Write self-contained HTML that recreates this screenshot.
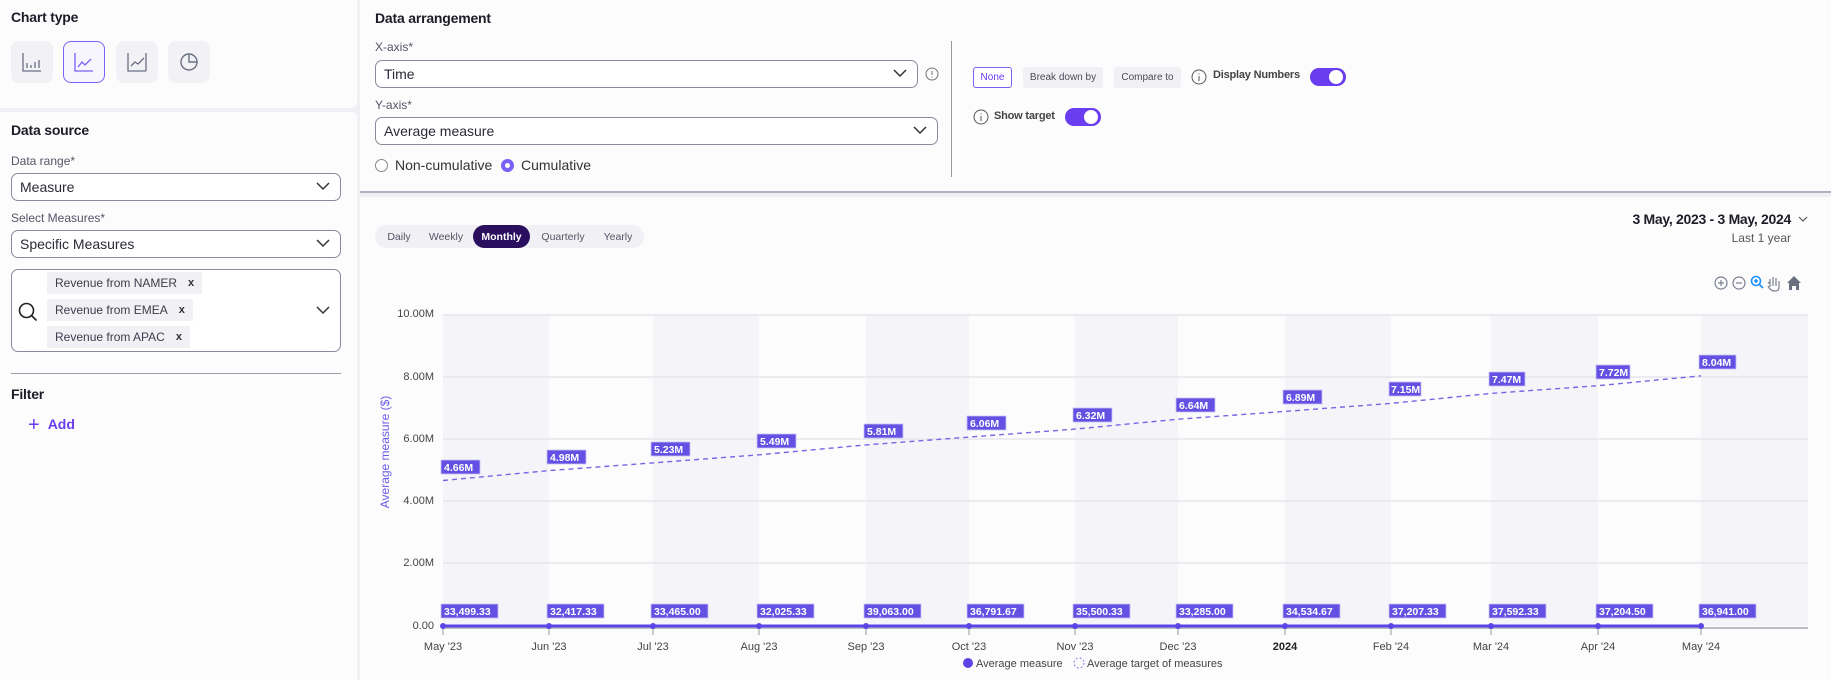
<!DOCTYPE html>
<html><head><meta charset="utf-8">
<style>
*{box-sizing:border-box;margin:0;padding:0}
body{width:1831px;height:680px;background:#efeff4;font-family:"Liberation Sans",sans-serif;color:#1f1f2e;position:relative;overflow:hidden}
.a{position:absolute}
.card{position:absolute;background:#fcfcfd}
.h{font-size:14px;font-weight:bold;color:#1c1c28;letter-spacing:-0.2px}
.lbl{font-size:12px;color:#555566}
.sel{position:absolute;border:1px solid #8a8a9c;border-radius:7px;background:#fff;font-size:14px;color:#2a2a38;padding-left:8px;display:flex;align-items:center}
.chev{position:absolute;right:10px;top:50%;margin-top:-5px}
.ib{position:absolute;width:42px;height:42px;border-radius:8px;background:#f1f1f6;display:flex;align-items:center;justify-content:center}
.chip{position:absolute;left:47px;height:22px;background:#f1f1f5;font-size:12px;color:#3c3c4c;padding:0 8px;display:flex;align-items:center}
.chip b{margin-left:11px;font-size:11px;color:#333}
.btn{position:absolute;top:67px;height:21px;border-radius:3px;background:#f1f1f5;font-size:10px;color:#4a4a5a;display:flex;align-items:center;justify-content:center}
.tog{position:absolute;width:36px;height:18px;border-radius:9px;background:#6a3df0}
.tog::after{content:"";position:absolute;right:3px;top:2px;width:14px;height:14px;border-radius:50%;background:#fff}
.tab{position:absolute;top:225px;height:23px;font-size:10.5px;color:#555566;display:flex;align-items:center;justify-content:center}
</style></head><body>

<div class="card" style="left:0;top:0;width:357px;height:108px;border-radius:0 0 6px 0"></div>
<div class="card" style="left:0;top:112px;width:357px;height:568px;border-radius:0 6px 0 0"></div>
<div class="a h" style="left:11px;top:9px">Chart type</div>

<div class="ib" style="left:11px;top:41px"><svg width="22" height="22" viewBox="0 0 22 22" fill="none" stroke="#6b6f82" stroke-width="1.3"><path d="M2 2v18h18M6 17v-5M10 17v-3M14 17v-6M18 17v-8"/></svg></div>
<div class="ib" style="left:63px;top:41px;background:#f7f6ff;border:1.5px solid #7b61f5"><svg width="22" height="22" viewBox="0 0 22 22" fill="none" stroke="#7b61f5" stroke-width="1.3"><path d="M2 2v18h18M5 16l4-5 3 3 6-6"/></svg></div>
<div class="ib" style="left:116px;top:41px"><svg width="22" height="22" viewBox="0 0 22 22" fill="none" stroke="#6b6f82" stroke-width="1.3"><path d="M2 2v18h18M20 2v18M5 15l4-4 3 2 6-6"/></svg></div>
<div class="ib" style="left:168px;top:41px"><svg width="22" height="22" viewBox="0 0 22 22" fill="none" stroke="#6b6f82" stroke-width="1.4"><circle cx="11" cy="11" r="8"/><path d="M11 3v8h8"/></svg></div>

<div class="a h" style="left:11px;top:122px">Data source</div>
<div class="a lbl" style="left:11px;top:154px">Data range*</div>
<div class="sel" style="left:11px;top:173px;width:330px;height:28px">Measure<svg class="chev" width="14" height="9" viewBox="0 0 14 9" fill="none" stroke="#333" stroke-width="1.5"><path d="M1 1l6 6 6-6"/></svg></div>
<div class="a lbl" style="left:11px;top:211px">Select Measures*</div>
<div class="sel" style="left:11px;top:230px;width:330px;height:28px">Specific Measures<svg class="chev" width="14" height="9" viewBox="0 0 14 9" fill="none" stroke="#333" stroke-width="1.5"><path d="M1 1l6 6 6-6"/></svg></div>
<div class="sel" style="left:11px;top:269px;width:330px;height:83px">
<svg class="a" style="left:6px;top:32px" width="20" height="20" viewBox="0 0 20 20" fill="none" stroke="#222" stroke-width="1.6"><circle cx="8.5" cy="8.5" r="7"/><path d="M13.5 13.5l5 5"/></svg>
<svg class="chev" width="14" height="9" viewBox="0 0 14 9" fill="none" stroke="#333" stroke-width="1.5"><path d="M1 1l6 6 6-6"/></svg></div>
<div class="chip" style="top:272px">Revenue from NAMER<b>x</b></div>
<div class="chip" style="top:299px">Revenue from EMEA<b>x</b></div>
<div class="chip" style="top:326px">Revenue from APAC<b>x</b></div>
<div class="a" style="left:11px;top:373px;width:330px;height:1px;background:#9a9aa8"></div>
<div class="a h" style="left:11px;top:386px">Filter</div>
<div class="a" style="left:28px;top:414px;font-size:14px;color:#6a3df0;font-weight:bold"><span style="font-size:20px;font-weight:normal;vertical-align:-2px;margin-right:8px">+</span>Add</div>

<div class="card" style="left:360px;top:0;width:1471px;height:193px;border-bottom:2px solid #b0b0c0"></div>
<div class="a h" style="left:375px;top:10px">Data arrangement</div>
<div class="a lbl" style="left:375px;top:40px">X-axis*</div>
<div class="sel" style="left:375px;top:60px;width:543px;height:28px">Time<svg class="chev" width="14" height="9" viewBox="0 0 14 9" fill="none" stroke="#333" stroke-width="1.5"><path d="M1 1l6 6 6-6"/></svg></div>
<svg class="a" style="left:925px;top:67px" width="14" height="14" viewBox="0 0 14 14" fill="none" stroke="#777" stroke-width="1"><circle cx="7" cy="7" r="6"/><path d="M7 4v4M7 9.5v1"/></svg>
<div class="a lbl" style="left:375px;top:98px">Y-axis*</div>
<div class="sel" style="left:375px;top:117px;width:563px;height:28px">Average measure<svg class="chev" width="14" height="9" viewBox="0 0 14 9" fill="none" stroke="#333" stroke-width="1.5"><path d="M1 1l6 6 6-6"/></svg></div>
<div class="a" style="left:375px;top:159px;width:13px;height:13px;border:1px solid #888;border-radius:50%;background:#fff"></div>
<div class="a" style="left:395px;top:157px;font-size:14px;color:#333">Non-cumulative</div>
<div class="a" style="left:501px;top:159px;width:13px;height:13px;border-radius:50%;background:#7b61f5"><div class="a" style="left:4px;top:4px;width:5px;height:5px;border-radius:50%;background:#fff"></div></div>
<div class="a" style="left:521px;top:157px;font-size:14px;color:#333">Cumulative</div>
<div class="a" style="left:951px;top:41px;width:1px;height:136px;background:#999"></div>

<div class="btn" style="left:973px;width:39px;border:1px solid #7b61f5;background:#fff;color:#6a3df0">None</div>
<div class="btn" style="left:1023px;width:80px">Break down by</div>
<div class="btn" style="left:1114px;width:67px">Compare to</div>
<svg class="a" style="left:1191px;top:69px" width="16" height="16" viewBox="0 0 16 16" fill="none" stroke="#555" stroke-width="1"><circle cx="8" cy="8" r="7"/><path d="M8 7v5M8 4.5v1"/></svg>
<div class="a" style="left:1213px;top:69px;font-size:11px;color:#444;font-weight:bold;letter-spacing:-0.2px">Display Numbers</div>
<div class="tog" style="left:1310px;top:68px"></div>
<svg class="a" style="left:973px;top:109px" width="16" height="16" viewBox="0 0 16 16" fill="none" stroke="#555" stroke-width="1"><circle cx="8" cy="8" r="7"/><path d="M8 7v5M8 4.5v1"/></svg>
<div class="a" style="left:994px;top:110px;font-size:11px;color:#444;font-weight:bold;letter-spacing:-0.2px">Show target</div>
<div class="tog" style="left:1065px;top:108px"></div>

<div class="card" style="left:360px;top:197px;width:1471px;height:483px"></div>
<div class="a" style="left:375px;top:225px;width:269px;height:23px;border-radius:12px;background:#f0f0f5"></div>
<div class="tab" style="left:380px;width:38px">Daily</div>
<div class="tab" style="left:422px;width:48px">Weekly</div>
<div class="tab" style="left:473px;width:57px;border-radius:12px;background:#2b0f5f;color:#fff;font-weight:bold">Monthly</div>
<div class="tab" style="left:533px;width:60px">Quarterly</div>
<div class="tab" style="left:596px;width:44px">Yearly</div>
<div class="a" style="right:40px;top:211px;font-size:14px;color:#1c1c28;font-weight:bold;letter-spacing:-0.3px">3 May, 2023 - 3 May, 2024</div>
<svg class="a" style="left:1798px;top:216px" width="10" height="7" viewBox="0 0 10 7" fill="none" stroke="#555" stroke-width="1.2"><path d="M1 1l4 4 4-4"/></svg>
<div class="a" style="right:40px;top:231px;font-size:12px;color:#555">Last 1 year</div>

<svg class="a" style="left:0;top:0" width="1831" height="680" viewBox="0 0 1831 680">
<g fill="none" stroke-width="1.2">
<g stroke="#7a7f90"><circle cx="1721" cy="283" r="6"/><path d="M1718 283h6M1721 280v6"/><circle cx="1739" cy="283" r="6"/><path d="M1736 283h6"/></g>
<g stroke="#1e90ff" stroke-width="1.6"><circle cx="1756" cy="281" r="4.5"/><path d="M1759 284l4 4M1754 281h4M1756 279v4"/></g>
<path stroke="#7a7f90" d="M1770 287v-8M1773 286v-9M1776 286v-8M1779 287v-6M1770 284l-2-2M1768 286c2 4 4 5 7 5s4-1 4-4"/>
</g>
<path fill="#6b7080" d="M1787 283l7-7 7 7h-2v7h-3v-4h-4v4h-3v-7z"/>

<g fill="#f5f5f9">
<rect x="443" y="315" width="106" height="311"/><rect x="653" y="315" width="106" height="311"/><rect x="866" y="315" width="103" height="311"/><rect x="1075" y="315" width="103" height="311"/><rect x="1285" y="315" width="106" height="311"/><rect x="1491" y="315" width="107" height="311"/><rect x="1701" y="315" width="107" height="311"/>
</g>
<g stroke="#e3e3e8" stroke-width="1.3">
<path d="M443 315H1808M443 377H1808M443 439H1808M443 501H1808M443 563H1808"/>
</g>
<path d="M443 628H1808" stroke="#bdbdc6" stroke-width="2"/>
<g stroke="#999" stroke-width="1"><path d="M443 628v7M549 628v7M653 628v7M759 628v7M866 628v7M969 628v7M1075 628v7M1178 628v7M1285 628v7M1391 628v7M1491 628v7M1598 628v7M1701 628v7"/></g>
<g font-size="11" fill="#444" text-anchor="end" font-family="Liberation Sans">
<text x="434" y="317">10.00M</text><text x="434" y="380">8.00M</text><text x="434" y="442">6.00M</text><text x="434" y="504">4.00M</text><text x="434" y="566">2.00M</text><text x="434" y="629">0.00</text>
</g>
<text transform="translate(389 452) rotate(-90)" text-anchor="middle" font-size="12" fill="#6b5be6" font-family="Liberation Sans">Average measure ($)</text>
<g font-size="11" fill="#444" text-anchor="middle" font-family="Liberation Sans">
<text x="443" y="650">May '23</text><text x="549" y="650">Jun '23</text><text x="653" y="650">Jul '23</text><text x="759" y="650">Aug '23</text><text x="866" y="650">Sep '23</text><text x="969" y="650">Oct '23</text><text x="1075" y="650">Nov '23</text><text x="1178" y="650">Dec '23</text><text x="1285" y="650" font-weight="bold" fill="#222">2024</text><text x="1391" y="650">Feb '24</text><text x="1491" y="650">Mar '24</text><text x="1598" y="650">Apr '24</text><text x="1701" y="650">May '24</text>
</g>
<polyline fill="none" stroke="#7766e6" stroke-width="1.4" stroke-dasharray="5 4" points="443,480.5 549,470.6 653,462.9 759,454.8 866,444.9 969,437.1 1075,429.1 1178,419.2 1285,411.4 1391,403.4 1491,393.4 1598,385.7 1701,375.8"/>
<path d="M443 626H1701" stroke="#5c45e6" stroke-width="3"/>
<g fill="#5c45e6"><circle cx="443" cy="626" r="3"/><circle cx="549" cy="626" r="3"/><circle cx="653" cy="626" r="3"/><circle cx="759" cy="626" r="3"/><circle cx="866" cy="626" r="3"/><circle cx="969" cy="626" r="3"/><circle cx="1075" cy="626" r="3"/><circle cx="1178" cy="626" r="3"/><circle cx="1285" cy="626" r="3"/><circle cx="1391" cy="626" r="3"/><circle cx="1491" cy="626" r="3"/><circle cx="1598" cy="626" r="3"/><circle cx="1701" cy="626" r="3"/></g>
<g font-size="10.5" font-weight="bold" fill="#fff" font-family="Liberation Sans">
<g fill="#6450e2" stroke="#c9c1f7" stroke-width="0.8">
<rect x="441" y="460" width="39" height="14"/><rect x="547" y="450" width="39" height="14"/><rect x="651" y="442" width="39" height="14"/><rect x="757" y="434" width="39" height="14"/><rect x="864" y="424" width="39" height="14"/><rect x="967" y="416" width="39" height="14"/><rect x="1073" y="408" width="39" height="14"/><rect x="1176" y="398" width="39" height="14"/><rect x="1283" y="390" width="39" height="14"/><rect x="1389" y="382" width="32" height="14"/><rect x="1489" y="372" width="36" height="14"/><rect x="1596" y="365" width="34" height="14"/><rect x="1699" y="355" width="37" height="14"/>
<rect x="441" y="604" width="57" height="14"/><rect x="547" y="604" width="57" height="14"/><rect x="651" y="604" width="57" height="14"/><rect x="757" y="604" width="57" height="14"/><rect x="864" y="604" width="57" height="14"/><rect x="967" y="604" width="57" height="14"/><rect x="1073" y="604" width="57" height="14"/><rect x="1176" y="604" width="57" height="14"/><rect x="1283" y="604" width="57" height="14"/><rect x="1389" y="604" width="57" height="14"/><rect x="1489" y="604" width="57" height="14"/><rect x="1596" y="604" width="57" height="14"/><rect x="1699" y="604" width="57" height="14"/>
</g>
<text x="444" y="471">4.66M</text><text x="550" y="461">4.98M</text><text x="654" y="453">5.23M</text><text x="760" y="445">5.49M</text><text x="867" y="435">5.81M</text><text x="970" y="427">6.06M</text><text x="1076" y="419">6.32M</text><text x="1179" y="409">6.64M</text><text x="1286" y="401">6.89M</text><text x="1391" y="393">7.15M</text><text x="1492" y="383">7.47M</text><text x="1599" y="376">7.72M</text><text x="1702" y="366">8.04M</text>
<text x="444" y="615">33,499.33</text><text x="550" y="615">32,417.33</text><text x="654" y="615">33,465.00</text><text x="760" y="615">32,025.33</text><text x="867" y="615">39,063.00</text><text x="970" y="615">36,791.67</text><text x="1076" y="615">35,500.33</text><text x="1179" y="615">33,285.00</text><text x="1286" y="615">34,534.67</text><text x="1392" y="615">37,207.33</text><text x="1492" y="615">37,592.33</text><text x="1599" y="615">37,204.50</text><text x="1702" y="615">36,941.00</text>
</g>
<circle cx="968" cy="663" r="5" fill="#5c45e6"/>
<text x="976" y="667" font-size="11" fill="#444" font-family="Liberation Sans">Average measure</text>
<circle cx="1079" cy="663" r="5" fill="none" stroke="#8877ee" stroke-dasharray="2 2"/>
<text x="1087" y="667" font-size="11" fill="#444" font-family="Liberation Sans">Average target of measures</text>
</svg>
</body></html>
